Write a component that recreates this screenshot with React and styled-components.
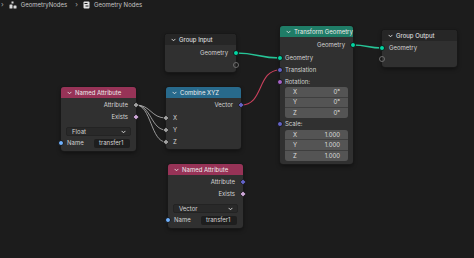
import React from 'react';
import styled, { createGlobalStyle } from 'styled-components';

const Global = createGlobalStyle`
  html, body { margin: 0; padding: 0; background: #1c1c1c; }
  #root { width: 474px; height: 258px; }
`;

const Canvas = styled.div`
  position: relative;
  width: 474px;
  height: 258px;
  overflow: hidden;
  background: #1c1c1c;
  font-family: Inter, "DejaVu Sans", sans-serif;
  font-size: 6px;
  line-height: 1;
  color: #d2d2d2;
`;

const Links = styled.svg`
  position: absolute;
  left: 0;
  top: 0;
`;

const Breadcrumbs = styled.div`
  position: absolute;
  left: 1px;
  top: 0;
  height: 9px;
  display: flex;
  align-items: center;
  color: #c4c4c4;
  font-size: 6px;
`;

const Crumb = styled.span`
  display: flex;
  align-items: center;
  gap: 4px;
  margin-right: ${p => p.$mr || 0}px;
`;

const Sep = styled.span`
  font-size: 7px;
  color: #a8a8a8;
  margin-right: ${p => p.$mr || 0}px;
`;

const NodeBox = styled.div`
  position: absolute;
  left: ${p => p.$x}px;
  top: ${p => p.$y}px;
  width: ${p => p.$w}px;
  background: #303030;
  border-radius: 3px;
  box-shadow: 0 0 0 1px #181818, 0 2px 4px rgba(0, 0, 0, 0.45);
  display: flex;
  flex-direction: column;
  padding-bottom: ${p => p.$pb ?? 2}px;
`;

const Header = styled.div`
  height: 11px;
  background: ${p => p.$color};
  border-radius: 3px 3px 0 0;
  display: flex;
  align-items: center;
  gap: 3px;
  padding-left: 6px;
  color: #ececec;
  margin-bottom: ${p => p.$mb ?? 1}px;
`;

const Row = styled.div`
  position: relative;
  height: ${p => p.$h ?? 12}px;
  margin-top: ${p => p.$mt ?? 0}px;
  display: flex;
  align-items: center;
  justify-content: ${p => (p.$out ? 'flex-end' : 'flex-start')};
  padding: ${p => (p.$out ? '0 8px 0 6px' : `0 6px 0 ${p.$pl ?? 6}px`)};
`;

const NameRow = styled(Row)`
  justify-content: space-between;
`;

const Socket = styled.span`
  position: absolute;
  top: 50%;
  ${p => (p.$out ? 'right: -3px;' : 'left: -3px;')}
  width: 6px;
  height: 6px;
  margin-top: -3px;
  box-sizing: border-box;
  background: ${p => (p.$hollow ? 'transparent' : p.$color)};
  border: 1px solid ${p => (p.$hollow ? '#6c6c6c' : '#151515')};
  border-radius: ${p => (p.$diamond ? '1px' : '50%')};
  transform: ${p => (p.$diamond ? 'rotate(45deg) scale(0.82)' : 'none')};
`;

const FieldGroup = styled.div`
  margin: ${p => p.$mt ?? 0}px 5px 0;
  border-radius: 3px;
  overflow: hidden;
  display: flex;
  flex-direction: column;
  gap: 1px;
  background: #3e3e3e;
`;

const Field = styled.div`
  height: 9.6px;
  background: #545454;
  display: flex;
  align-items: center;
  justify-content: space-between;
  padding: 0 8px;
  color: #dcdcdc;
`;

const Select = styled.div`
  margin: ${p => p.$mt ?? 4}px 5px 0;
  height: 9px;
  box-sizing: border-box;
  background: #292929;
  border: 1px solid #232323;
  border-radius: 2px;
  display: flex;
  align-items: center;
  justify-content: space-between;
  padding: 0 4px 0 5px;
  color: #d4d4d4;
`;

const TextInput = styled.div`
  width: 36px;
  height: 9px;
  box-sizing: border-box;
  background: #1e1e1e;
  border-radius: 2px;
  padding-left: 5px;
  display: flex;
  align-items: center;
  color: #d4d4d4;
`;

const Chevron = () => (
  <svg width="5" height="4" viewBox="0 0 5 4">
    <polyline points="0.6,0.9 2.5,2.8 4.4,0.9" fill="none" stroke="#e0e0e0" strokeWidth="0.9" />
  </svg>
);

const NodeHeader = ({ color, title, mb }) => (
  <Header $color={color} $mb={mb}>
    <Chevron />
    <span>{title}</span>
  </Header>
);

const link = (x1, y1, x2, y2, k = 0.5) => {
  const d = Math.max(Math.abs(x2 - x1) * k, 6);
  return `M${x1},${y1} C${x1 + d},${y1} ${x2 - d},${y2} ${x2},${y2}`;
};

const C = {
  geo: '#00d6a3',
  vec: '#6363c7',
  rot: '#a663c7',
  str: '#70b2ff',
  flt: '#a1a1a1',
  bool: '#cca6d6',
};

const NamedAttribute = ({ x, y, type, attrColor }) => (
  <NodeBox $x={x} $y={y} $w={75} $pb={3}>
    <NodeHeader color="#973357" title="Named Attribute" />
    <Row $out>
      Attribute
      <Socket $out $diamond $color={attrColor} />
    </Row>
    <Row $out>
      Exists
      <Socket $out $diamond $color={C.bool} />
    </Row>
    <Select>
      <span>{type}</span>
      <Chevron />
    </Select>
    <NameRow $h={10} $mt={2}>
      <span>Name</span>
      <TextInput>transfer1</TextInput>
      <Socket $color={C.str} />
    </NameRow>
  </NodeBox>
);

export default function App() {
  return (
    <Canvas>
      <Global />
      <Links width="474" height="258">
        <path d={link(236, 53, 280, 58)} stroke="#27c497" strokeWidth="1.4" fill="none" />
        <path d={link(353, 45, 382, 48)} stroke="#27c497" strokeWidth="1.4" fill="none" />
        <path d={link(241, 105, 280, 70, 0.6)} stroke="#c8405c" strokeWidth="1.1" fill="none" />
        <path d={link(136, 105, 166, 118)} stroke="#b8b8b8" strokeWidth="0.8" fill="none" />
        <path d={link(136, 105, 166, 130)} stroke="#b8b8b8" strokeWidth="0.8" fill="none" />
        <path d={link(136, 105, 166, 142)} stroke="#b8b8b8" strokeWidth="0.8" fill="none" />
      </Links>

      <Breadcrumbs>
        <Sep $mr={5}>›</Sep>
        <Crumb $mr={8}>
          <svg width="8" height="8" viewBox="0 0 8 8">
            <rect x="2.5" y="0.5" width="2" height="2" fill="#d8d8d8" />
            <rect x="0.5" y="3.5" width="3" height="4" rx="0.5" fill="#d8d8d8" />
            <rect x="4.5" y="4.5" width="3" height="3" rx="0.5" fill="#d8d8d8" />
          </svg>
          GeometryNodes
        </Crumb>
        <Sep $mr={5}>›</Sep>
        <Crumb>
          <svg width="7" height="8" viewBox="0 0 7 8">
            <rect x="0.5" y="0.5" width="6" height="7" rx="1" fill="#e4e4e4" />
            <rect x="1.5" y="2" width="3" height="1" fill="#1c1c1c" />
            <rect x="2.5" y="4.5" width="3" height="1" fill="#1c1c1c" />
          </svg>
          Geometry Nodes
        </Crumb>
      </Breadcrumbs>

      {/* Group Input */}
      <NodeBox $x={165} $y={34} $w={71} $pb={2}>
        <NodeHeader color="#262626" title="Group Input" mb={2} />
        <Row $out>
          Geometry
          <Socket $out $color={C.geo} />
        </Row>
        <Row $out $h={11}>
          <Socket $out $hollow />
        </Row>
      </NodeBox>

      {/* Group Output */}
      <NodeBox $x={382} $y={30} $w={75} $pb={3}>
        <NodeHeader color="#262626" title="Group Output" />
        <Row $pl={7}>
          Geometry
          <Socket $color={C.geo} />
        </Row>
        <Row $h={10}>
          <Socket $hollow />
        </Row>
      </NodeBox>

      {/* Transform Geometry */}
      <NodeBox $x={280} $y={26} $w={73} $pb={3}>
        <NodeHeader color="#1f7d67" title="Transform Geometry" mb={2} />
        <Row $out>
          Geometry
          <Socket $out $color={C.geo} />
        </Row>
        <Row $mt={1} $pl={5}>
          Geometry
          <Socket $color={C.geo} />
        </Row>
        <Row $pl={5}>
          Translation
          <Socket $color={C.vec} />
        </Row>
        <Row $pl={5} $h={11}>
          Rotation:
          <Socket $color={C.rot} />
        </Row>
        <FieldGroup>
          <Field><span>X</span><span>0°</span></Field>
          <Field><span>Y</span><span>0°</span></Field>
          <Field><span>Z</span><span>0°</span></Field>
        </FieldGroup>
        <Row $pl={5} $h={11} $mt={1}>
          Scale:
          <Socket $color={C.vec} />
        </Row>
        <FieldGroup>
          <Field><span>X</span><span>1.000</span></Field>
          <Field><span>Y</span><span>1.000</span></Field>
          <Field><span>Z</span><span>1.000</span></Field>
        </FieldGroup>
      </NodeBox>

      {/* Combine XYZ */}
      <NodeBox $x={166} $y={87} $w={75} $pb={1}>
        <NodeHeader color="#286a8c" title="Combine XYZ" />
        <Row $out>
          Vector
          <Socket $out $diamond $color={C.vec} />
        </Row>
        <Row $mt={1} $pl={7}>
          X
          <Socket $diamond $color={C.flt} />
        </Row>
        <Row $pl={7}>
          Y
          <Socket $diamond $color={C.flt} />
        </Row>
        <Row $pl={7}>
          Z
          <Socket $diamond $color={C.flt} />
        </Row>
      </NodeBox>

      <NamedAttribute x={61} y={87} type="Float" attrColor={C.flt} />
      <NamedAttribute x={168} y={164} type="Vector" attrColor={C.vec} />
    </Canvas>
  );
}
